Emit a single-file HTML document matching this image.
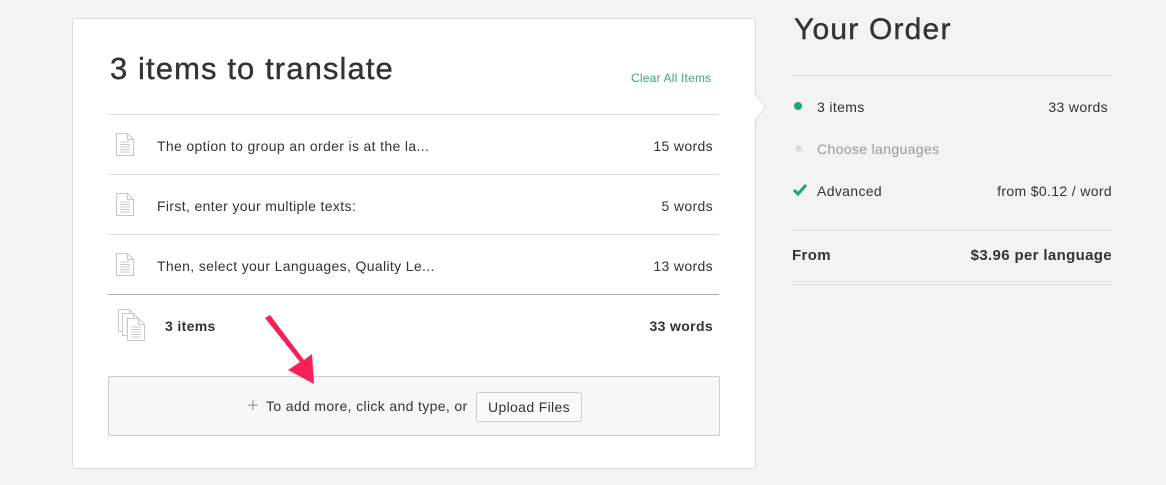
<!DOCTYPE html>
<html><head><style>
body{margin:0;width:1166px;height:485px;background:#f3f3f3;font-family:"Liberation Sans",sans-serif;color:#333;position:relative;overflow:hidden;letter-spacing:0.35px}
.card{position:absolute;left:72px;top:18px;width:682px;height:449px;background:#fff;border:1px solid #ddd;border-radius:3px}
.a{position:absolute}
h1{position:absolute;left:110px;top:51px;margin:0;font-size:31px;font-weight:normal;color:#333;letter-spacing:1.1px;-webkit-text-stroke:0.4px #333}
.row{position:absolute;left:108px;width:611px;height:60px;border-top:1px solid #ddd;font-size:14px}
.row .t{position:absolute;left:49px;top:23px}
.row .w{position:absolute;right:6px;top:23px}
.doc{position:absolute;left:8px;top:18px}
</style></head><body>
<div class="card"></div>
<h1>3 items to translate</h1>
<div class="a" style="left:631px;top:71px;font-size:12px;color:#3aa57a;letter-spacing:0.2px">Clear All Items</div>
<svg width="0" height="0" style="position:absolute"><defs>
<g id="d"><path d="M0.5 0.5H11.5L17.5 6.5V22.5H0.5Z" fill="#fff" stroke="#c8c8c8"/><path d="M11.5 0.5V6.5H17.5" fill="none" stroke="#c8c8c8"/><path d="M4 9H14M4 11.5H14M4 14H14M4 16.5H14M4 19H14" stroke="#ccc"/></g></defs></svg>
<div class="row" style="top:114px"><svg class="doc" width="20" height="24"><use href="#d"/></svg><span class="t">The option to group an order is at the la...</span><span class="w">15 words</span></div>
<div class="row" style="top:174px"><svg class="doc" width="20" height="24"><use href="#d"/></svg><span class="t">First, enter your multiple texts:</span><span class="w">5 words</span></div>
<div class="row" style="top:234px"><svg class="doc" width="20" height="24"><use href="#d"/></svg><span class="t">Then, select your Languages, Quality Le...</span><span class="w">13 words</span></div>
<div class="row" style="top:294px;border-top-color:#aaa;font-weight:bold"><svg class="doc" width="34" height="36" style="left:10px;top:14px"><use href="#d"/><use href="#d" x="4" y="4"/><use href="#d" x="9" y="9"/></svg><span class="t" style="left:57px">3 items</span><span class="w">33 words</span></div>
<div class="a" style="left:108px;top:376px;width:610px;height:58px;background:#f7f7f7;border:1px solid #ccc;border-radius:2px"></div>
<div class="a" style="left:247px;top:396px;font-size:20px;color:#aaa;line-height:20px">+</div>
<div class="a" style="left:266px;top:398px;font-size:14px;color:#333">To add more, click and type, or</div>
<div class="a" style="left:476px;top:392px;width:104px;height:28px;background:#fafafa;border:1px solid #ccc;border-radius:3px;font-size:14px;line-height:28px;text-align:center">Upload Files</div>
<svg class="a" style="left:258px;top:312px" width="60" height="76"><path d="M7 6 L42 50 L30 58 L56 72 L54 42 L46 48 L12 3Z" fill="#f81f5a"/></svg>
<div class="a" style="left:794px;top:13px;font-size:30px;color:#333;letter-spacing:1.2px;-webkit-text-stroke:0.4px #333">Your Order</div>
<div class="a" style="left:792px;top:75px;width:320px;border-top:1px solid #ddd"></div>
<svg class="a" style="left:754px;top:93px" width="14" height="28"><path d="M0 0L12 14L0 28" fill="#fff" stroke="#ddd"/></svg>
<div class="a" style="left:794px;top:102px;width:8px;height:8px;border-radius:50%;background:#1fa37a"></div>
<div class="a" style="left:817px;top:99px;font-size:14px">3 items</div>
<div class="a" style="right:58px;top:99px;font-size:14px">33 words</div>
<div class="a" style="left:795px;top:145px;width:7px;height:7px;border-radius:50%;background:#ddd"></div>
<div class="a" style="left:817px;top:141px;font-size:14px;color:#999">Choose languages</div>
<svg class="a" style="left:793px;top:184px" width="14" height="12"><path d="M1 6L5 10L13 1" fill="none" stroke="#1fa37a" stroke-width="3"/></svg>
<div class="a" style="left:817px;top:183px;font-size:14px">Advanced</div>
<div class="a" style="right:54px;top:183px;font-size:14px">from $0.12 / word</div>
<div class="a" style="left:792px;top:230px;width:320px;border-top:1px solid #ddd"></div>
<div class="a" style="left:792px;top:247px;font-size:15px;font-weight:bold">From</div>
<div class="a" style="right:54px;top:247px;font-size:15px;font-weight:bold">$3.96 per language</div>
<div class="a" style="left:792px;top:281px;width:320px;height:2px;border-top:1px solid #ddd;border-bottom:1px solid #ddd"></div>
</body></html>
